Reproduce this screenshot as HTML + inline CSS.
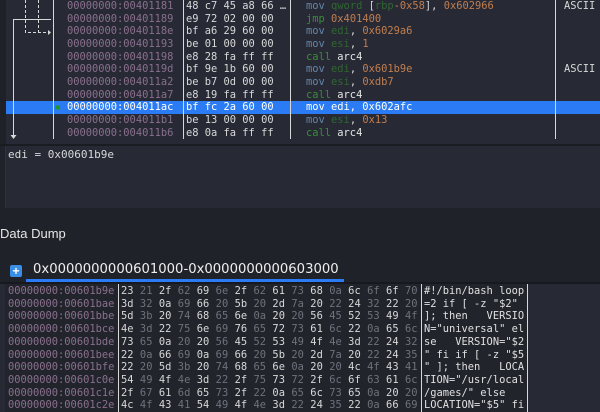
<!DOCTYPE html>
<html><head><meta charset="utf-8"><style>
*{margin:0;padding:0;box-sizing:border-box}
body{width:600px;height:412px;overflow:hidden;background:#20222a;position:relative;font-family:"DejaVu Sans Mono","Liberation Mono",monospace;font-size:10.4px;color:#d8d8d8}
.a{position:absolute}
.row{position:absolute;height:12.65px;line-height:12.65px;white-space:pre}
.ad{color:#8a6f8d}
.m{color:#6485a8}.r{color:#2f6630}.n{color:#c07d4f}.c{color:#3c8a3a}.w{color:#e4e4e4}
.d{color:#6e727c}
</style></head><body>
<div class="a" style="left:0;top:0;width:600px;height:144px;background:#272a35"></div>
<div class="a" style="left:0;top:0;width:6px;height:144px;background:#1f2129"></div>
<div class="a" style="left:6px;top:101px;width:594px;height:12.5px;background:#2a7bf4"></div>
<div class="a" style="left:0;top:144px;width:600px;height:2px;background:#1a1c22"></div>
<svg class="a" style="left:0;top:0" width="60" height="142">
<g stroke="#d8d8d8" fill="none" stroke-width="1">
<path d="M25.5 0V32.5H48M38.5 0V32.5" stroke-dasharray="3,2"/>
<path d="M13.5 136V19.5H51"/>
<path d="M53.5 0V139"/>
</g>
<path d="M48 30L51 32.5L48 35Z" fill="#d8d8d8"/>
<path d="M10.5 135L13.5 139L16.5 135Z" fill="#d8d8d8"/>
<ellipse cx="58.5" cy="107.5" rx="3.5" ry="2.3" fill="#1f9a2a"/>
</svg>
<div class="a" style="left:183px;top:0;width:1px;height:139px;background:#d8d8d8"></div>
<div class="a" style="left:290px;top:0;width:1px;height:139px;background:#d8d8d8"></div>
<div class="a" style="left:555px;top:0;width:1px;height:139px;background:#d8d8d8"></div>

<div class="row ad" style="left:67px;top:0">00000000:00401181</div>
<div class="row ad" style="left:67px;top:12.65px">00000000:00401189</div>
<div class="row ad" style="left:67px;top:25.3px">00000000:0040118e</div>
<div class="row ad" style="left:67px;top:37.95px">00000000:00401193</div>
<div class="row ad" style="left:67px;top:50.6px">00000000:00401198</div>
<div class="row ad" style="left:67px;top:63.25px">00000000:0040119d</div>
<div class="row ad" style="left:67px;top:75.9px">00000000:004011a2</div>
<div class="row ad" style="left:67px;top:88.55px">00000000:004011a7</div>
<div class="row" style="left:67px;top:101.2px;color:#fff">00000000:004011ac</div>
<div class="row ad" style="left:67px;top:113.85px">00000000:004011b1</div>
<div class="row ad" style="left:67px;top:126.5px">00000000:004011b6</div>

<div class="row" style="left:186px;top:0">48 c7 45 a8 66 …</div>
<div class="row" style="left:186px;top:12.65px">e9 72 02 00 00</div>
<div class="row" style="left:186px;top:25.3px">bf a6 29 60 00</div>
<div class="row" style="left:186px;top:37.95px">be 01 00 00 00</div>
<div class="row" style="left:186px;top:50.6px">e8 28 fa ff ff</div>
<div class="row" style="left:186px;top:63.25px">bf 9e 1b 60 00</div>
<div class="row" style="left:186px;top:75.9px">be b7 0d 00 00</div>
<div class="row" style="left:186px;top:88.55px">e8 19 fa ff ff</div>
<div class="row" style="left:186px;top:101.2px;color:#fff">bf fc 2a 60 00</div>
<div class="row" style="left:186px;top:113.85px">be 13 00 00 00</div>
<div class="row" style="left:186px;top:126.5px">e8 0a fa ff ff</div>

<div class="row" style="left:306px;top:0"><span class="m">mov</span> <span class="r">qword</span> [<span class="r">rbp</span><span class="n">-0x58</span>], <span class="n">0x602966</span></div>
<div class="row" style="left:306px;top:12.65px"><span class="c">jmp</span> <span class="n">0x401400</span></div>
<div class="row" style="left:306px;top:25.3px"><span class="m">mov</span> <span class="r">edi</span>, <span class="n">0x6029a6</span></div>
<div class="row" style="left:306px;top:37.95px"><span class="m">mov</span> <span class="r">esi</span>, <span class="n">1</span></div>
<div class="row" style="left:306px;top:50.6px"><span class="c">call</span> <span class="w">arc4</span></div>
<div class="row" style="left:306px;top:63.25px"><span class="m">mov</span> <span class="r">edi</span>, <span class="n">0x601b9e</span></div>
<div class="row" style="left:306px;top:75.9px"><span class="m">mov</span> <span class="r">esi</span>, <span class="n">0xdb7</span></div>
<div class="row" style="left:306px;top:88.55px"><span class="c">call</span> <span class="w">arc4</span></div>
<div class="row" style="left:306px;top:101.2px;color:#fff">mov edi, 0x602afc</div>
<div class="row" style="left:306px;top:113.85px"><span class="m">mov</span> <span class="r">esi</span>, <span class="n">0x13</span></div>
<div class="row" style="left:306px;top:126.5px"><span class="c">call</span> <span class="w">arc4</span></div>
<div class="row" style="left:564px;top:0">ASCII</div>
<div class="row" style="left:564px;top:63.25px">ASCII</div>

<div class="a" style="left:5px;top:146px;width:595px;height:62px;background:#272a35;border-left:1px solid #30333d"></div>
<div class="row" style="left:8px;top:149px;font-size:11px">edi = 0x00601b9e</div>

<div class="a" style="left:0;top:226px;font-family:'Liberation Sans',sans-serif;font-size:13px;color:#e6e6e6">Data Dump</div>
<div class="a" style="left:10px;top:265px;width:12px;height:12px;background:#3a8ee6;border-radius:2px;color:#fff;font:bold 12px/12px 'Liberation Sans',sans-serif;text-align:center">+</div>
<div class="a" style="left:33px;top:262px;font-family:'DejaVu Sans','Liberation Sans',sans-serif;font-size:13.2px;color:#eee">0x0000000000601000-0x0000000000603000</div>
<div class="a" style="left:0;top:282px;width:600px;height:2px;background:#17191e"></div>
<div class="a" style="left:26px;top:279px;width:318px;height:3px;background:#2a7bf4"></div>
<div class="a" style="left:0;top:284px;width:600px;height:128px;background:#272a35"></div>
<div class="a" style="left:5px;top:284px;width:522px;height:128px;background:#22242c"></div>
<div class="a" style="left:118px;top:284px;width:1px;height:128px;background:#d8d8d8"></div>
<div class="a" style="left:421px;top:284px;width:1px;height:128px;background:#d8d8d8"></div>
<div class="a" style="left:527px;top:284px;width:1px;height:128px;background:#d8d8d8"></div>

<div class="a" style="left:8px;top:285px;line-height:12.7px;white-space:pre"><span class="ad">00000000:00601b9e
00000000:00601bae
00000000:00601bbe
00000000:00601bce
00000000:00601bde
00000000:00601bee
00000000:00601bfe
00000000:00601c0e
00000000:00601c1e
00000000:00601c2e</span></div>
<div class="a" style="left:121px;top:285px;line-height:12.7px;white-space:pre;letter-spacing:0.05px">23 <span class="d">21</span> 2f <span class="d">62</span> 69 <span class="d">6e</span> 2f <span class="d">62</span> 61 <span class="d">73</span> 68 <span class="d">0a</span> 6c <span class="d">6f</span> 6f <span class="d">70</span>
3d <span class="d">32</span> 0a <span class="d">69</span> 66 <span class="d">20</span> 5b <span class="d">20</span> 2d <span class="d">7a</span> 20 <span class="d">22</span> 24 <span class="d">32</span> 22 <span class="d">20</span>
5d <span class="d">3b</span> 20 <span class="d">74</span> 68 <span class="d">65</span> 6e <span class="d">0a</span> 20 <span class="d">20</span> 56 <span class="d">45</span> 52 <span class="d">53</span> 49 <span class="d">4f</span>
4e <span class="d">3d</span> 22 <span class="d">75</span> 6e <span class="d">69</span> 76 <span class="d">65</span> 72 <span class="d">73</span> 61 <span class="d">6c</span> 22 <span class="d">0a</span> 65 <span class="d">6c</span>
73 <span class="d">65</span> 0a <span class="d">20</span> 20 <span class="d">56</span> 45 <span class="d">52</span> 53 <span class="d">49</span> 4f <span class="d">4e</span> 3d <span class="d">22</span> 24 <span class="d">32</span>
22 <span class="d">0a</span> 66 <span class="d">69</span> 0a <span class="d">69</span> 66 <span class="d">20</span> 5b <span class="d">20</span> 2d <span class="d">7a</span> 20 <span class="d">22</span> 24 <span class="d">35</span>
22 <span class="d">20</span> 5d <span class="d">3b</span> 20 <span class="d">74</span> 68 <span class="d">65</span> 6e <span class="d">0a</span> 20 <span class="d">20</span> 4c <span class="d">4f</span> 43 <span class="d">41</span>
54 <span class="d">49</span> 4f <span class="d">4e</span> 3d <span class="d">22</span> 2f <span class="d">75</span> 73 <span class="d">72</span> 2f <span class="d">6c</span> 6f <span class="d">63</span> 61 <span class="d">6c</span>
2f <span class="d">67</span> 61 <span class="d">6d</span> 65 <span class="d">73</span> 2f <span class="d">22</span> 0a <span class="d">65</span> 6c <span class="d">73</span> 65 <span class="d">0a</span> 20 <span class="d">20</span>
4c <span class="d">4f</span> 43 <span class="d">41</span> 54 <span class="d">49</span> 4f <span class="d">4e</span> 3d <span class="d">22</span> 24 <span class="d">35</span> 22 <span class="d">0a</span> 66 <span class="d">69</span></div>
<div class="a" style="left:424px;top:285px;line-height:12.7px;white-space:pre;color:#e0e0e0">#!/bin/bash loop
=2 if [ -z "$2" 
]; then   VERSIO
N="universal" el
se   VERSION="$2
" fi if [ -z "$5
" ]; then   LOCA
TION="/usr/local
/games/" else   
LOCATION="$5" fi</div>
</body></html>
